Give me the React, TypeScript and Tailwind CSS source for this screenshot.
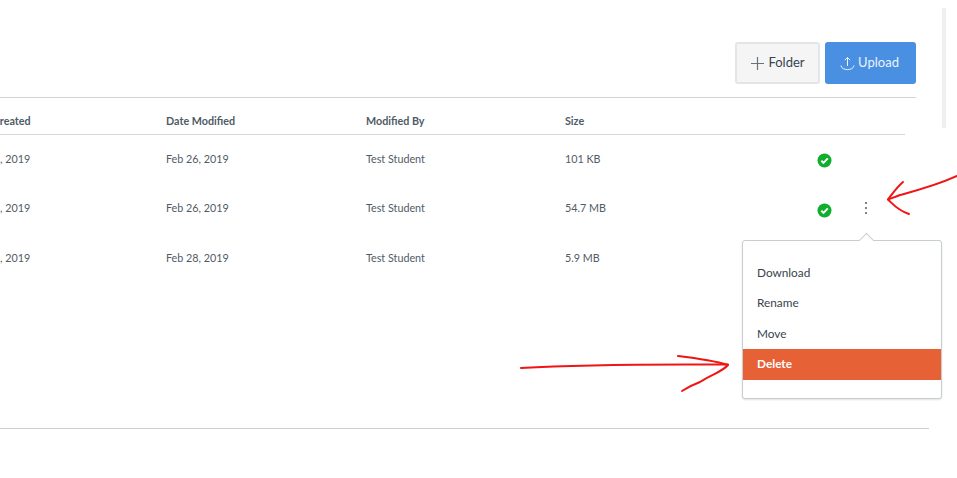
import React from "react";

const rows = [
  { c: "Feb 26, 2019", m: "Feb 26, 2019", s: "101 KB", k: false },
  { c: "Feb 26, 2019", m: "Feb 26, 2019", s: "54.7 MB", k: true },
  { c: "Feb 28, 2019", m: "Feb 28, 2019", s: "5.9 MB", k: false },
];

function Check() {
  return (
    <svg width="15" height="15" viewBox="0 0 15 15">
      <circle cx="7.5" cy="7.5" r="7" fill="#0fae2c" />
      <path d="M4.3 7.7 L6.5 9.8 L10.8 5.4" fill="none" stroke="#fff" strokeWidth="1.9" />
    </svg>
  );
}

export default function App() {
  return (
    <div className="relative w-[957px] h-[478px] overflow-hidden bg-white text-[10.75px] text-[#4f5b66] [font-family:Lato,sans-serif]">
      <div className="w-[916px] pt-[42px]">
        <div className="flex justify-end gap-[5px]">
          <button className="flex items-center justify-center gap-[3px] w-[85px] h-[42px] rounded-[3px] border-2 border-[#e3e6e9] bg-[#f5f5f5] text-[13px] text-[#39444e]">
            <svg width="15" height="15" viewBox="0 0 15 15" stroke="#66727c" strokeWidth="1.2">
              <path d="M7.5 1 V14 M1 7.5 H14" />
            </svg>
            Folder
          </button>
          <button className="flex items-center justify-center gap-[3px] pr-[2px] w-[91px] h-[42px] rounded-[3px] bg-[#4a90e2] text-[13px] text-[#eaf3fc]">
            <svg width="15" height="15" viewBox="0 0 15 15" fill="none" stroke="#eaf3fc" strokeWidth="1">
              <path d="M7.5 10 V1.5 M4.8 4.2 L7.5 1.5 L10.2 4.2 M1 9.5 C1.5 15 13.5 15 14 9.5" />
            </svg>
            Upload
          </button>
        </div>
        <div className="mt-[13px] border-t border-[#d0d4d7]" />
      </div>

      <div className="w-[905px]">
        <div className="ml-[-34px] grid grid-cols-[200px_200px_199px_199px] h-[37px] pt-[11px] items-center border-b-[1.5px] border-[#d3d7dd] font-bold">
          <span className="pl-[1px]">Date Created</span>
          <span>Date Modified</span>
          <span>Modified By</span>
          <span>Size</span>
        </div>
        {rows.map((r) => (
          <div key={r.s} className="ml-[-34px] grid grid-cols-[200px_200px_199px_252px_48px_auto] h-[49.5px] pb-[2px] items-center">
            <span className="pl-[1.5px]">{r.c}</span>
            <span>{r.m}</span>
            <span>Test Student</span>
            <span>{r.s}</span>
            <span className="flex translate-y-[2px]">
              <Check />
            </span>
            {r.k ? (
              <svg width="4" height="14" viewBox="0 0 4 14" fill="#5a6773" className="ml-[-1px]">
                <circle cx="2" cy="2" r="1.1" />
                <circle cx="2" cy="7" r="1.1" />
                <circle cx="2" cy="12" r="1.1" />
              </svg>
            ) : (
              <span />
            )}
          </div>
        ))}
      </div>

      <div className="mt-[144px] w-[929px] border-t border-[#c9cfd4]" />

      <div className="absolute left-[942px] top-[8px] w-[4px] h-[120px] bg-[#eeeef3]" />

      {/* popup menu */}
      <div className="absolute left-[742px] top-[240px] w-[200px] h-[159px] rounded-[3px] border border-[#c7cdd1] bg-white pt-[17px] shadow-[0_1px_2px_rgba(0,0,0,0.12)] text-[11.8px] text-[#39444e]">
        <div className="absolute left-[118px] top-[-6px] w-[11px] h-[11px] rotate-45 border-l border-t border-[#c7cdd1] bg-white" />
        <div className="h-[30.4px] pb-[1px] pl-[14px] flex items-center">Download</div>
        <div className="h-[30.4px] pb-[1px] pl-[14px] flex items-center">Rename</div>
        <div className="h-[30.4px] pb-[1px] pl-[14px] flex items-center">Move</div>
        <div className="h-[30.4px] pb-[1px] pl-[14px] flex items-center font-bold bg-[#e66135] text-white">Delete</div>
      </div>

      {/* hand drawn arrows */}
      <svg className="absolute left-0 top-0" width="957" height="478" fill="none" stroke="#f01414" strokeWidth="2" strokeLinecap="round" strokeLinejoin="round">
        <path d="M521 368 C570 365 640 364 728 364.5" />
        <path d="M678 356 C695 358 712 360 728 365 C722 372 712 374 700 382 C692 385 688 387 682 391" />
        <path d="M957 176 C935 186 915 191 900 195 C895 197 892 198 888 199.5" />
        <path d="M903 182 C897 187 893 193 888 199.5 C893 204 897 210 909 214" />
      </svg>
    </div>
  );
}
